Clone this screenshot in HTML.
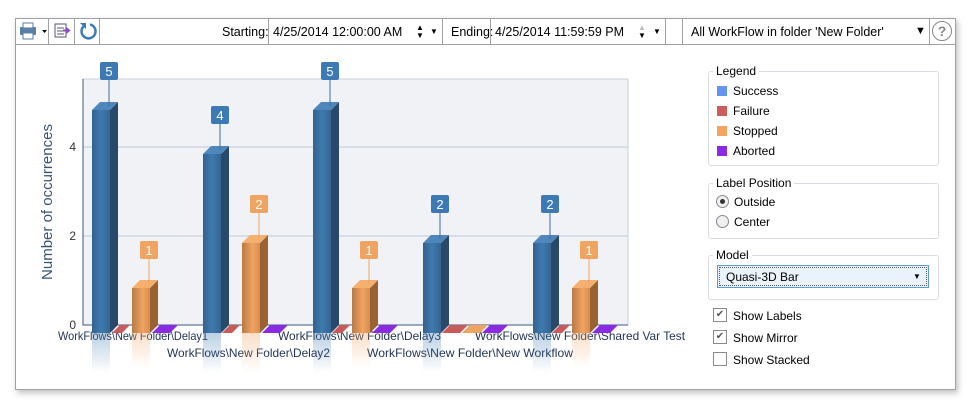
<!DOCTYPE html>
<html><head><meta charset="utf-8"><style>
body{margin:0;width:971px;height:407px;background:#fff;font-family:"Segoe UI","Liberation Sans",sans-serif;font-size:12px;color:#000;position:relative;overflow:hidden}
.a{position:absolute}
.panel{left:15px;top:18px;width:939px;height:370px;border:1px solid #a0a0a0;box-shadow:2px 3px 6px rgba(0,0,0,.25);background:#fff}
.tb{left:15px;top:18px;width:940px;height:26px;border-bottom:1px solid #a0a0a0}
.sep{top:18px;width:1px;height:26px;background:#a0a0a0}
.txt{top:25px;font-size:12.5px}
.grp{border:1px solid #d8dde3;border-radius:3px}
.gl{background:#fff;padding:0 3px;font-size:12px;top:-8px;left:4px}
.sq{width:10px;height:10px}
.cb{width:12px;height:12px;border:1px solid #8a8a8a;background:#fff}
</style></head><body>
<div class="a panel"></div>
<div class="a tb"></div>
<svg class="a" style="left:18px;top:21px" width="30" height="20"><rect x="2" y="6" width="16" height="8" rx="1" fill="#5a7fa5"/><rect x="5" y="2" width="10" height="5" fill="#fff" stroke="#5a7fa5"/><rect x="5" y="12" width="10" height="6" fill="#fff" stroke="#5a7fa5"/><path d="M24 9h5l-2.5 3z" fill="#000"/></svg>
<div class="a sep" style="left:48px"></div>
<svg class="a" style="left:53px;top:22px" width="20" height="18"><rect x="2" y="2" width="11" height="13" fill="#fff" stroke="#557"/><path d="M4 6h7M4 9h7M4 12h7" stroke="#557"/><path d="M10 8.5h5M13 6l3 2.5-3 2.5" stroke="#8a4cc0" stroke-width="2" fill="none"/></svg>
<div class="a sep" style="left:74px"></div>
<svg class="a" style="left:77px;top:20px" width="22" height="22"><path d="M7 6A7 7 0 1 0 13 4.5" stroke="#3d7cb8" stroke-width="2.5" fill="none"/><path d="M3 3h6v6z" fill="#3d7cb8"/></svg>
<div class="a sep" style="left:99px"></div>
<div class="a txt" style="left:222px">Starting:</div>
<div class="a sep" style="left:268px"></div>
<div class="a txt" style="left:273px">4/25/2014 12:00:00 AM</div>
<div class="a" style="left:416px;top:24px;font-size:8px;line-height:8px">▲<br>▼</div>
<div class="a" style="left:430px;top:27px;font-size:8px">▼</div>
<div class="a sep" style="left:442px"></div>
<div class="a txt" style="left:451px">Ending:</div>
<div class="a sep" style="left:490px"></div>
<div class="a txt" style="left:495px">4/25/2014 11:59:59 PM</div>
<div class="a" style="left:638px;top:24px;font-size:8px;line-height:8px"><span style="color:#bbb">▲</span><br>▼</div>
<div class="a" style="left:653px;top:27px;font-size:8px">▼</div>
<div class="a sep" style="left:665px"></div>
<div class="a sep" style="left:682px"></div>
<div class="a txt" style="left:691px">All WorkFlow in folder 'New Folder'</div>
<div class="a" style="left:915px;top:25px;font-size:11px">▼</div>
<div class="a sep" style="left:929px"></div>
<div class="a" style="left:932px;top:21px;width:18px;height:18px;border:1.5px solid #888;border-radius:50%;text-align:center;font-size:14px;line-height:18px;color:#888;font-weight:bold">?</div>

<svg class="a" style="left:0;top:0" width="700" height="400">
<defs>
<linearGradient id="bf" x1="0" x2="1"><stop offset="0" stop-color="#34628f"/><stop offset=".5" stop-color="#3f7ab0"/><stop offset="1" stop-color="#356590"/></linearGradient>
<linearGradient id="of" x1="0" x2="1"><stop offset="0" stop-color="#b87a45"/><stop offset=".6" stop-color="#f0a462"/><stop offset="1" stop-color="#d88c4f"/></linearGradient>
<linearGradient id="mb" x1="0" y1="0" x2="0" y2="1"><stop offset="0" stop-color="#3f7ab0" stop-opacity=".35"/><stop offset="1" stop-color="#3f7ab0" stop-opacity="0"/></linearGradient>
<linearGradient id="mo" x1="0" y1="0" x2="0" y2="1"><stop offset="0" stop-color="#f0a462" stop-opacity=".35"/><stop offset="1" stop-color="#f0a462" stop-opacity="0"/></linearGradient>
</defs>
<rect x="83" y="79" width="545" height="246" fill="#f0f2f6" stroke="#c8d0dc"/>
<path d="M83 147H628M83 236H628" stroke="#c0cbd9"/>
<path d="M83 79V325H628" stroke="#3a5a85" fill="none"/>
<g font-size="12" fill="#333" text-anchor="end"><text x="76" y="151">4</text><text x="76" y="240">2</text><text x="76" y="329">0</text></g>
<text transform="translate(52,202) rotate(-90)" text-anchor="middle" font-size="15" fill="#3b5373">Number of occurrences</text>
<g font-size="12" fill="#1f3350" lengthAdjust="spacingAndGlyphs">
<text x="58" y="340" textLength="150" lengthAdjust="spacingAndGlyphs">WorkFlows\New Folder\Delay1</text>
<text x="167" y="357" textLength="163" lengthAdjust="spacingAndGlyphs">WorkFlows\New Folder\Delay2</text>
<text x="278" y="340" textLength="163" lengthAdjust="spacingAndGlyphs">WorkFlows\New Folder\Delay3</text>
<text x="367" y="357" textLength="206" lengthAdjust="spacingAndGlyphs">WorkFlows\New Folder\New Workflow</text>
<text x="475" y="340" textLength="210" lengthAdjust="spacingAndGlyphs">WorkFlows\New Folder\Shared Var Test</text>
</g>
<g>
<rect x="92" y="333" width="18" height="40" fill="url(#mb)"/><rect x="203" y="333" width="18" height="40" fill="url(#mb)"/><rect x="313" y="333" width="18" height="40" fill="url(#mb)"/><rect x="423" y="333" width="18" height="40" fill="url(#mb)"/><rect x="533" y="333" width="18" height="40" fill="url(#mb)"/>
<rect x="132" y="333" width="18" height="35" fill="url(#mo)"/><rect x="242" y="333" width="18" height="40" fill="url(#mo)"/><rect x="352" y="333" width="18" height="35" fill="url(#mo)"/><rect x="572" y="333" width="18" height="35" fill="url(#mo)"/>
</g>
<g>
<path d="M112 333l8-8h10l-8 8z" fill="#c95a5a"/><path d="M152 333l8-8h18l-8 8z" fill="#8a2be2"/>
<path d="M222 333l8-8h10l-8 8z" fill="#c95a5a"/><path d="M262 333l8-8h18l-8 8z" fill="#8a2be2"/>
<path d="M332 333l8-8h10l-8 8z" fill="#c95a5a"/><path d="M372 333l8-8h18l-8 8z" fill="#8a2be2"/>
<path d="M442 333l8-8h18l-8 8z" fill="#c95a5a"/><path d="M462 333l8-8h18l-8 8z" fill="#f0a462"/><path d="M482 333l8-8h18l-8 8z" fill="#8a2be2"/>
<path d="M552 333l8-8h10l-8 8z" fill="#c95a5a"/><path d="M592 333l8-8h18l-8 8z" fill="#8a2be2"/>
</g>
<g>
<rect x="92" y="110" width="18" height="223" fill="url(#bf)"/><path d="M110 110l8-8v223l-8 8z" fill="#29496b"/><path d="M92 110l8-8h18l-8 8z" fill="#4f87bd"/>
<rect x="203" y="154" width="18" height="179" fill="url(#bf)"/><path d="M221 154l8-8v179l-8 8z" fill="#29496b"/><path d="M203 154l8-8h18l-8 8z" fill="#4f87bd"/>
<rect x="313" y="110" width="18" height="223" fill="url(#bf)"/><path d="M331 110l8-8v223l-8 8z" fill="#29496b"/><path d="M313 110l8-8h18l-8 8z" fill="#4f87bd"/>
<rect x="423" y="243" width="18" height="90" fill="url(#bf)"/><path d="M441 243l8-8v90l-8 8z" fill="#29496b"/><path d="M423 243l8-8h18l-8 8z" fill="#4f87bd"/>
<rect x="533" y="243" width="18" height="90" fill="url(#bf)"/><path d="M551 243l8-8v90l-8 8z" fill="#29496b"/><path d="M533 243l8-8h18l-8 8z" fill="#4f87bd"/>
</g>
<g>
<rect x="132" y="288" width="18" height="45" fill="url(#of)"/><path d="M150 288l8-8v45l-8 8z" fill="#9a6232"/><path d="M132 288l8-8h18l-8 8z" fill="#f5b070"/>
<rect x="242" y="243" width="18" height="90" fill="url(#of)"/><path d="M260 243l8-8v90l-8 8z" fill="#9a6232"/><path d="M242 243l8-8h18l-8 8z" fill="#f5b070"/>
<rect x="352" y="288" width="18" height="45" fill="url(#of)"/><path d="M370 288l8-8v45l-8 8z" fill="#9a6232"/><path d="M352 288l8-8h18l-8 8z" fill="#f5b070"/>
<rect x="572" y="288" width="18" height="45" fill="url(#of)"/><path d="M590 288l8-8v45l-8 8z" fill="#9a6232"/><path d="M572 288l8-8h18l-8 8z" fill="#f5b070"/>
</g>
<g stroke="#3d6f9f"><path d="M109 80V106M220 124V150M330 80V106M440 213V239M550 213V239"/></g>
<g stroke="#f0a462"><path d="M149 259V284M259 213V239M369 259V284M589 259V284"/></g>
<g font-size="13" fill="#fff" text-anchor="middle">
<rect x="100" y="62" width="18" height="18" rx="2" fill="#3d7ab5"/><text x="109" y="76">5</text>
<rect x="211" y="106" width="18" height="18" rx="2" fill="#3d7ab5"/><text x="220" y="120">4</text>
<rect x="321" y="62" width="18" height="18" rx="2" fill="#3d7ab5"/><text x="330" y="76">5</text>
<rect x="431" y="195" width="18" height="18" rx="2" fill="#3d7ab5"/><text x="440" y="209">2</text>
<rect x="541" y="195" width="18" height="18" rx="2" fill="#3d7ab5"/><text x="550" y="209">2</text>
<rect x="140" y="241" width="18" height="18" rx="2" fill="#f0a462"/><text x="149" y="255">1</text>
<rect x="250" y="195" width="18" height="18" rx="2" fill="#f0a462"/><text x="259" y="209">2</text>
<rect x="360" y="241" width="18" height="18" rx="2" fill="#f0a462"/><text x="369" y="255">1</text>
<rect x="580" y="241" width="18" height="18" rx="2" fill="#f0a462"/><text x="589" y="255">1</text>
</g>
</svg>

<div class="a grp" style="left:708px;top:71px;width:229px;height:93px">
<div class="a gl">Legend</div>
<div class="a sq" style="left:8px;top:14px;background:#6495ed"></div><div class="a" style="left:24px;top:12px">Success</div>
<div class="a sq" style="left:8px;top:34px;background:#cd5c5c"></div><div class="a" style="left:24px;top:32px">Failure</div>
<div class="a sq" style="left:8px;top:54px;background:#f4a460"></div><div class="a" style="left:24px;top:52px">Stopped</div>
<div class="a sq" style="left:8px;top:74px;background:#8a2be2"></div><div class="a" style="left:24px;top:72px">Aborted</div>
</div>
<div class="a grp" style="left:708px;top:183px;width:229px;height:54px">
<div class="a gl">Label Position</div>
<div class="a" style="left:7px;top:11px;width:11px;height:11px;border:1px solid #888;border-radius:50%;background:#f0f0f0"><div class="a" style="left:3px;top:3px;width:5px;height:5px;border-radius:50%;background:#333"></div></div><div class="a" style="left:25px;top:11px">Outside</div>
<div class="a" style="left:7px;top:31px;width:11px;height:11px;border:1px solid #888;border-radius:50%;background:#f0f0f0"></div><div class="a" style="left:25px;top:31px">Center</div>
</div>
<div class="a grp" style="left:708px;top:255px;width:229px;height:43px">
<div class="a gl">Model</div>
<div class="a" style="left:8px;top:9px;width:210px;height:21px;border:1px solid #5b9bd5;background:#eaf2fb;outline:1px dotted #555;outline-offset:-3px"><div class="a" style="left:8px;top:4px">Quasi-3D Bar</div><div class="a" style="left:195px;top:6px;font-size:8px">▼</div></div>
</div>
<div class="a cb" style="left:713px;top:308px;font-size:10px;line-height:12px;text-align:center;color:#555">✔</div><div class="a" style="left:733px;top:309px">Show Labels</div>
<div class="a cb" style="left:713px;top:330px;font-size:10px;line-height:12px;text-align:center;color:#555">✔</div><div class="a" style="left:733px;top:331px">Show Mirror</div>
<div class="a cb" style="left:713px;top:352px"></div><div class="a" style="left:733px;top:353px">Show Stacked</div>
</body></html>
